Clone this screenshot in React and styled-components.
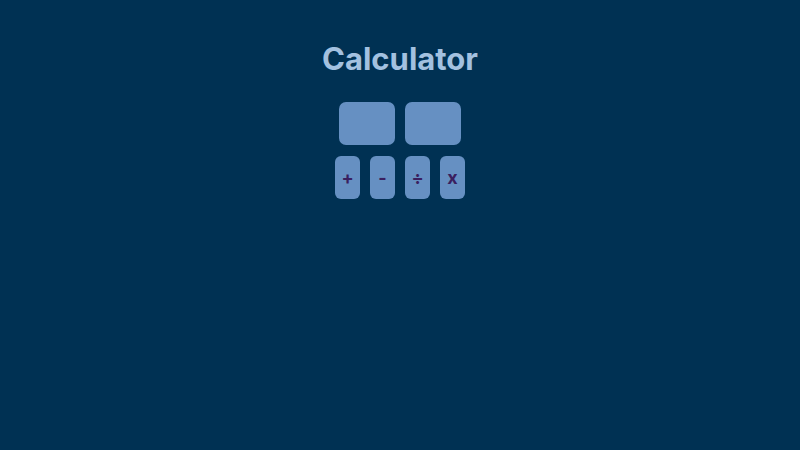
// Calculator page
import React, { useState } from 'react';
import styled, { createGlobalStyle } from 'styled-components';

const GlobalStyle = createGlobalStyle`
	body {
		margin: 0;
		background: #003153;
		font-family: Inter, "Noto Sans", sans-serif;
	}
`;

const Page = styled.div`
	display: flex;
	flex-direction: column;
	align-items: center;
	padding-top: 39px;
`;

const Title = styled.h1`
	margin: 0;
	font-size: 31px;
	font-weight: 700;
	line-height: 40px;
	color: #a3c1e0;
`;

const Inputs = styled.div`
	display: flex;
	gap: 10px;
	margin-top: 23px;
`;

const NumberInput = styled.input`
	box-sizing: border-box;
	width: 56px;
	height: 43px;
	border: none;
	border-radius: 7px;
	background: #6690c2;
	color: #2f1d5c;
	font-family: inherit;
	font-size: 16px;
	text-align: center;
	outline: none;
`;

const Operators = styled.div`
	display: flex;
	gap: 10px;
	margin-top: 11px;
`;

const OpButton = styled.button`
	width: 25px;
	height: 43px;
	padding: 0;
	border: none;
	border-radius: 6px;
	background: #6690c2;
	color: #3a1f5f;
	font-family: inherit;
	font-size: 18px;
	font-weight: 700;
	cursor: pointer;
`;

const ops = ['+', '-', '÷', 'x'];

const App = () => {
	const [a, setA] = useState('');
	const [b, setB] = useState('');

	return (
		<>
			<GlobalStyle />
			<Page>
				<Title>Calculator</Title>
				<Inputs>
					<NumberInput value={a} onChange={(ev) => setA(ev.target.value)} />
					<NumberInput value={b} onChange={(ev) => setB(ev.target.value)} />
				</Inputs>
				<Operators>
					{ops.map((op) => (
						<OpButton key={op}>{op}</OpButton>
					))}
				</Operators>
			</Page>
		</>
	);
};

export default App;
